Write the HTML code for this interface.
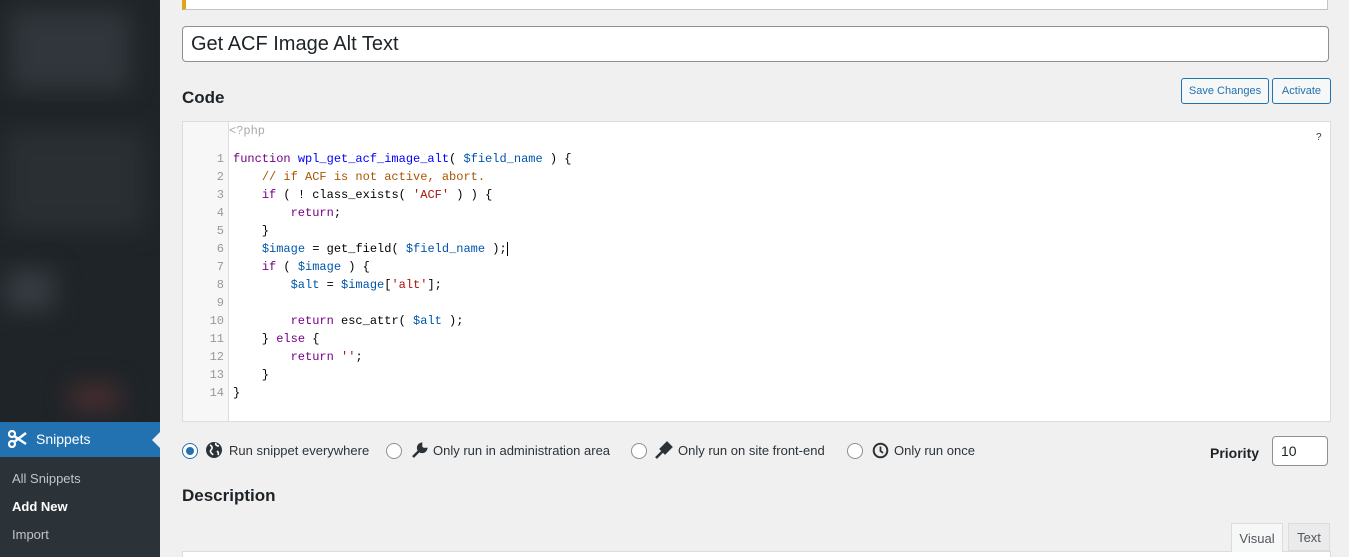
<!DOCTYPE html><html><head><style>
html,body{margin:0;width:1349px;height:557px;overflow:hidden}
body{background:#f0f0f1;font-family:"Liberation Sans",sans-serif;position:relative;color:#1d2327}
#sb{position:absolute;left:0;top:0;width:160px;height:557px;background:#2c3338}
#sbt{position:absolute;left:0;top:0;width:160px;height:422px;background:#1f2428;overflow:hidden}
.blur{position:absolute;background:#30363b;filter:blur(12px);border-radius:6px}
#snip{position:absolute;left:0;top:422px;width:160px;height:35px;background:#2271b1;color:#fff;font-size:14px}
.sub{position:absolute;left:12px;font-size:13px;color:#c3c4c7}
.abs{position:absolute}
.code{font-family:"Liberation Mono",monospace;font-size:12px;line-height:18px;white-space:pre}
.k{color:#708}.v{color:#05a}.c{color:#a50}.s{color:#a11}.f{color:#00f}
.radio{position:absolute;width:14px;height:14px;border:1px solid #8c8f94;border-radius:50%;background:#fff;top:443px}
.lbl{position:absolute;top:443px;font-size:13px;color:#2c3338}
.btn{position:absolute;top:78px;height:24px;border:1px solid #2271b1;border-radius:3px;color:#2271b1;font-size:11px;line-height:24px;text-align:center;background:#f6f7f7}
</style></head><body>
<div id="sb"><div id="sbt">
<div class="blur" style="left:10px;top:10px;width:120px;height:80px"></div>
<div class="blur" style="left:5px;top:130px;width:140px;height:100px;background:#2a2f34"></div>
<div class="blur" style="left:5px;top:270px;width:50px;height:40px;background:#363c42"></div>
<div class="blur" style="left:70px;top:385px;width:50px;height:25px;background:#4a2e30"></div>
</div></div>
<div id="snip"><svg class="abs" style="left:8px;top:8px" width="20" height="18" viewBox="0 0 20 18"><circle cx="4" cy="4" r="3" fill="none" stroke="#fff" stroke-width="2.2"/><circle cx="4" cy="14" r="3" fill="none" stroke="#fff" stroke-width="2.2"/><path d="M6 6L18 14M6 12L18 3" stroke="#fff" stroke-width="2.5"/></svg><span class="abs" style="left:36px;top:9px">Snippets</span>
<div class="abs" style="right:0;top:10px;width:0;height:0;border:8px solid transparent;border-right-color:#f0f0f1"></div></div>
<div class="sub" style="top:471px">All Snippets</div>
<div class="sub" style="top:499px;color:#fff;font-weight:bold">Add New</div>
<div class="sub" style="top:527px">Import</div>

<div class="abs" style="left:182px;top:-2px;width:1146px;height:12px;background:#fff;border:1px solid #c3c4c7;border-left:4px solid #dba617;box-sizing:border-box"></div>
<div class="abs" style="left:182px;top:26px;width:1147px;height:36px;background:#fff;border:1px solid #8c8f94;border-radius:4px;box-sizing:border-box;font-size:20px;padding:6px 8px">Get ACF Image Alt Text</div>
<div class="abs" style="left:182px;top:88px;font-size:17px;font-weight:bold;color:#1d2327">Code</div>
<div class="btn" style="left:1181px;width:86px">Save Changes</div>
<div class="btn" style="left:1272px;width:57px">Activate</div>

<div class="abs" style="left:182px;top:121px;width:1149px;height:301px;background:#fff;border:1px solid #dcdcde;box-sizing:border-box"></div>
<div class="abs" style="left:183px;top:122px;width:45px;height:299px;background:#f7f7f7;border-right:1px solid #ddd"></div>
<div class="abs code" style="left:229px;top:122px;color:#aaa">&lt;?php</div>
<div class="abs" style="left:1316px;top:132px;font-size:10px;color:#333">?</div>
<div class="abs code" style="left:196px;top:150px;color:#999;text-align:right;width:28px">1
2
3
4
5
6
7
8
9
10
11
12
13
14</div>
<div class="abs code" style="left:233px;top:150px;color:#000"><span class="k">function</span> <span class="f">wpl_get_acf_image_alt</span>( <span class="v">$field_name</span> ) {
    <span class="c">// if ACF is not active, abort.</span>
    <span class="k">if</span> ( ! class_exists( <span class="s">'ACF'</span> ) ) {
        <span class="k">return</span>;
    }
    <span class="v">$image</span> = get_field( <span class="v">$field_name</span> );<span style="border-left:1px solid #000"></span>
    <span class="k">if</span> ( <span class="v">$image</span> ) {
        <span class="v">$alt</span> = <span class="v">$image</span>[<span class="s">'alt'</span>];

        <span class="k">return</span> esc_attr( <span class="v">$alt</span> );
    } <span class="k">else</span> {
        <span class="k">return</span> <span class="s">''</span>;
    }
}</div>

<div class="radio" style="left:182px;border-color:#2271b1"><div style="width:8px;height:8px;border-radius:50%;background:#2271b1;margin:3px"></div></div>
<svg class="abs" style="left:205px;top:441px" width="18" height="18" viewBox="0 0 18 18"><circle cx="9" cy="9" r="8" fill="#2c3338"/><path d="M5 4c2 1 3 3 1 5s1 3 2 5M11 2c-1 2 1 3 3 3M12 10c1 1 2 2 1 4" stroke="#fff" stroke-width="1.6" fill="none"/></svg>
<div class="lbl" style="left:229px">Run snippet everywhere</div>
<div class="radio" style="left:386px"></div>
<svg class="abs" style="left:411px;top:442px" width="17" height="17" viewBox="0 0 17 17"><path d="M2 15L9 8M10 2a4 4 0 1 0 5 5l-3 0-2-2z" stroke="#2c3338" stroke-width="2.6" fill="#2c3338"/></svg>
<div class="lbl" style="left:433px">Only run in administration area</div>
<div class="radio" style="left:631px"></div>
<svg class="abs" style="left:655px;top:441px" width="18" height="18" viewBox="0 0 18 18"><path d="M1 17L8 10M6 8l4 4 6-6-4-4z" stroke="#2c3338" stroke-width="2.6" fill="#2c3338"/></svg>
<div class="lbl" style="left:678px">Only run on site front-end</div>
<div class="radio" style="left:847px"></div>
<svg class="abs" style="left:872px;top:442px" width="17" height="17" viewBox="0 0 17 17"><circle cx="8.5" cy="8.5" r="6.8" fill="none" stroke="#2c3338" stroke-width="2"/><path d="M8.5 4.5v4.5l2.5 2" stroke="#2c3338" stroke-width="1.8" fill="none"/></svg>
<div class="lbl" style="left:894px">Only run once</div>
<div class="abs" style="left:1210px;top:445px;font-size:14px;font-weight:bold">Priority</div>
<div class="abs" style="left:1272px;top:436px;width:56px;height:30px;background:#fff;border:1px solid #8c8f94;border-radius:4px;box-sizing:border-box;font-size:14px;padding:6px 8px">10</div>

<div class="abs" style="left:182px;top:486px;font-size:17px;font-weight:bold">Description</div>
<div class="abs" style="left:182px;top:551px;width:1149px;height:6px;background:#fff;border:1px solid #dcdcde;border-bottom:none;box-sizing:border-box"></div>
<div class="abs" style="left:1231px;top:523px;width:52px;height:29px;background:#f6f7f7;border:1px solid #dcdcde;border-bottom:none;box-sizing:border-box;font-size:13px;text-align:center;line-height:30px;color:#50575e">Visual</div>
<div class="abs" style="left:1288px;top:523px;width:42px;height:28px;background:#ebebeb;border:1px solid #dcdcde;box-sizing:border-box;font-size:13px;text-align:center;line-height:28px;color:#50575e">Text</div>
</body></html>
